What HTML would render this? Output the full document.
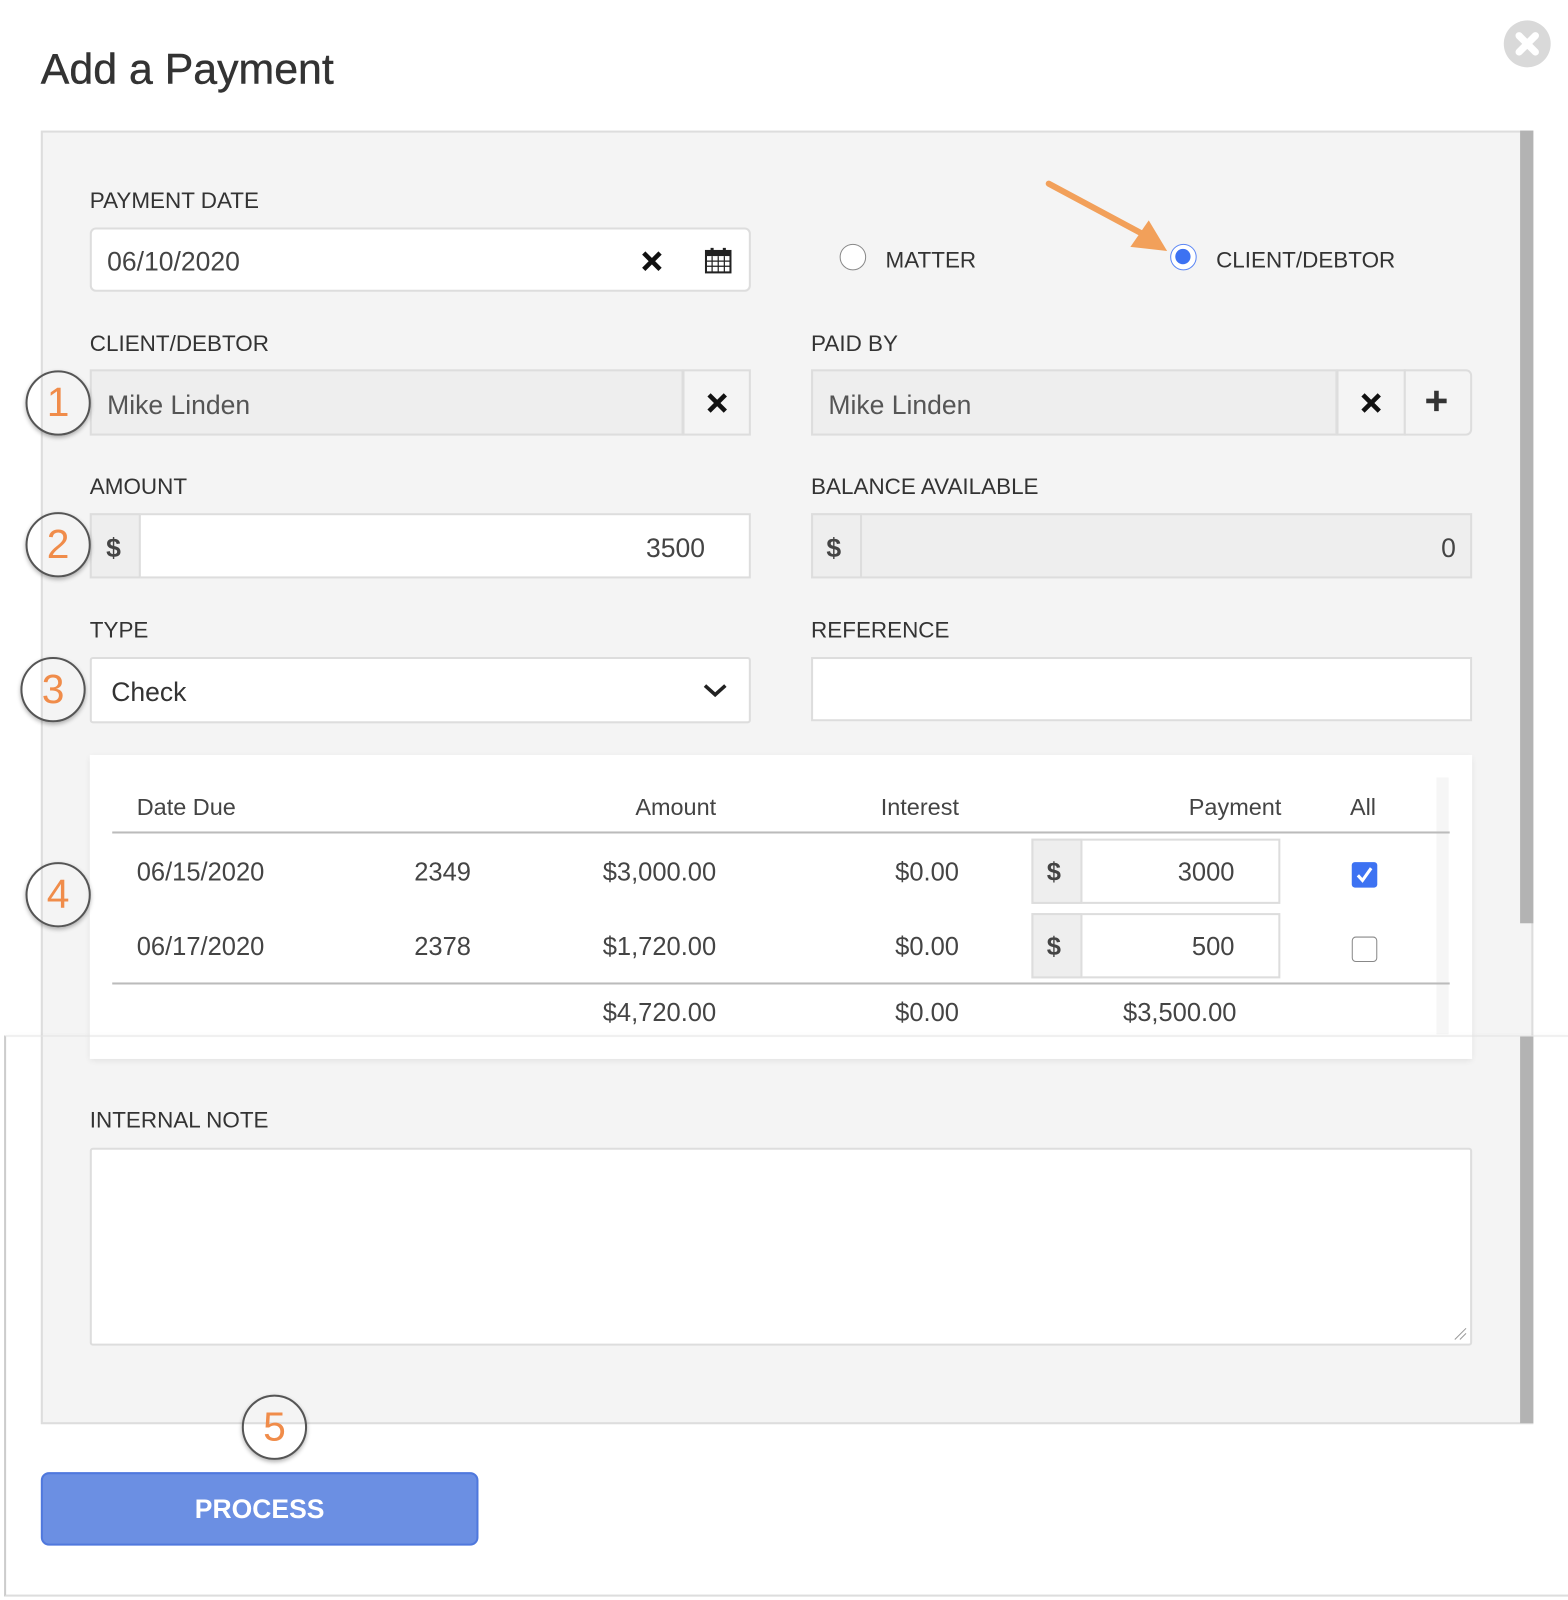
<!DOCTYPE html>
<html><head><meta charset="utf-8"><style>
html,body{margin:0;padding:0;background:#fff;width:1568px;height:1600px;overflow:hidden}
#w{position:absolute;left:0;top:0;width:1537px;height:1568px;transform:scale(1.0202);transform-origin:0 0;font-family:"Liberation Sans",sans-serif;color:#333}
.a{position:absolute}
.lbl{position:absolute;font-size:22px;color:#333;letter-spacing:0px}
.box{position:absolute;box-sizing:border-box;border:2px solid #ddd;background:#fff}
.v{position:absolute;font-size:26px;color:#444;line-height:1}
.c{position:absolute;border:2px solid #555;border-radius:50%;box-sizing:border-box;color:#f08c4a;font-size:40px;text-align:center;box-shadow:0 2px 4px rgba(0,0,0,.3)}
.t{position:absolute;font-size:25px;color:#444;line-height:1}
.b{font-weight:bold}
</style></head><body><div id="w">
<div class="a" style="left:40px;top:44px;font-size:42px;color:#333;-webkit-text-stroke:0.4px #333">Add a Payment</div>
<div class="a" style="left:1474px;top:20px;width:46px;height:46px;border-radius:50%;background:#d9d9d9"><svg width="46" height="46"><path d="M15 15L31 31M31 15L15 31" stroke="#fff" stroke-width="7" stroke-linecap="round"/></svg></div>
<div class="a" style="left:4px;top:1015px;width:1533px;height:550px;border-left:2px solid #ccc;border-bottom:2px solid #ddd;box-sizing:border-box"></div>
<div class="a" style="left:40px;top:128px;width:1463px;height:1268px;background:#f4f4f4;border:2px solid #ddd;box-sizing:border-box"></div>
<div class="a" style="left:1490px;top:128px;width:13px;height:777px;background:#b3b3b3"></div>
<div class="a" style="left:1490px;top:1015px;width:13px;height:380px;background:#b3b3b3"></div>

<div class="lbl" style="left:88px;top:184px">PAYMENT DATE</div>
<div class="box" style="left:88px;top:223px;width:648px;height:63px;border-radius:6px"></div>
<div class="v" style="left:105px;top:243px">06/10/2020</div>
<svg class="a" style="left:628px;top:245px" width="22" height="22"><path d="M3 3L19 19M19 3L3 19" stroke="#111" stroke-width="4.5"/></svg>
<svg class="a" style="left:690px;top:241px" width="28" height="28"><rect x="2" y="5" width="24" height="21" fill="none" stroke="#222" stroke-width="2"/><rect x="2" y="5" width="24" height="5" fill="#222"/><path d="M8 2v6M20 2v6" stroke="#222" stroke-width="3"/><path d="M2 15h24M2 20h24M8 10v16M14 10v16M20 10v16" stroke="#222" stroke-width="1.2"/></svg>

<div class="a" style="left:823px;top:239px;width:26px;height:26px;border-radius:50%;border:1.5px solid #888;background:#fff;box-sizing:border-box"></div>
<div class="lbl" style="left:868px;top:242px">MATTER</div>
<div class="a" style="left:1147px;top:239px;width:26px;height:26px;border-radius:50%;border:1.5px solid #5b86f5;background:#fff;box-sizing:border-box"><div class="a" style="left:4px;top:4px;width:15px;height:15px;border-radius:50%;background:#3d72f2"></div></div>
<div class="lbl" style="left:1192px;top:242px">CLIENT/DEBTOR</div>
<svg class="a" style="left:1020px;top:170px" width="140" height="90"><path d="M8 10L105 62" stroke="#f2a05a" stroke-width="6" stroke-linecap="round"/><path d="M124 76L88 72L106 46Z" fill="#f2a05a"/></svg>

<div class="lbl" style="left:88px;top:324px">CLIENT/DEBTOR</div>
<div class="box" style="left:88px;top:362px;width:582px;height:65px;background:#eee"></div>
<div class="box" style="left:669px;top:362px;width:67px;height:65px;background:#f4f4f4"></div>
<div class="v" style="left:105px;top:384px;color:#555">Mike Linden</div>
<svg class="a" style="left:692px;top:384px" width="22" height="22"><path d="M3 3L19 19M19 3L3 19" stroke="#111" stroke-width="4.5"/></svg>

<div class="lbl" style="left:795px;top:324px">PAID BY</div>
<div class="box" style="left:795px;top:362px;width:516px;height:65px;background:#eee"></div>
<div class="box" style="left:1310px;top:362px;width:68px;height:65px;background:#f4f4f4"></div>
<div class="box" style="left:1376px;top:362px;width:67px;height:65px;background:#f4f4f4;border-radius:0 6px 6px 0"></div>
<div class="v" style="left:812px;top:384px;color:#555">Mike Linden</div>
<svg class="a" style="left:1333px;top:384px" width="22" height="22"><path d="M3 3L19 19M19 3L3 19" stroke="#111" stroke-width="4.5"/></svg>
<svg class="a" style="left:1397px;top:382px" width="22" height="22"><path d="M11 1V21M1 11H21" stroke="#333" stroke-width="4.5"/></svg>

<div class="lbl" style="left:88px;top:464px">AMOUNT</div>
<div class="box" style="left:88px;top:503px;width:648px;height:64px"></div>
<div class="box" style="left:88px;top:503px;width:50px;height:64px;background:#eee"></div>
<div class="v b" style="left:104px;top:524px">$</div>
<div class="v" style="left:500px;width:191px;text-align:right;top:524px">3500</div>

<div class="lbl" style="left:795px;top:464px">BALANCE AVAILABLE</div>
<div class="box" style="left:795px;top:503px;width:648px;height:64px;background:#eee"></div>
<div class="box" style="left:795px;top:503px;width:50px;height:64px;background:#eee"></div>
<div class="v b" style="left:810px;top:524px">$</div>
<div class="v" style="left:1300px;width:127px;text-align:right;top:524px">0</div>

<div class="lbl" style="left:88px;top:605px">TYPE</div>
<div class="box" style="left:88px;top:644px;width:648px;height:65px;border-radius:3px"></div>
<div class="v" style="left:109px;top:665px;color:#333">Check</div>
<svg class="a" style="left:688px;top:668px" width="26" height="18"><path d="M3 4L13 13L23 4" fill="none" stroke="#222" stroke-width="3.5"/></svg>

<div class="lbl" style="left:795px;top:605px">REFERENCE</div>
<div class="box" style="left:795px;top:644px;width:648px;height:63px"></div>

<div class="a" style="left:88px;top:740px;width:1355px;height:298px;background:#fff;box-shadow:0 2px 6px rgba(0,0,0,.08)"></div>
<div class="a" style="left:1408px;top:762px;width:12px;height:252px;background:#f6f6f6"></div>
<div class="t" style="left:134px;top:780px;font-size:23px">Date Due</div>
<div class="t" style="left:560px;width:142px;text-align:right;top:780px;font-size:23px">Amount</div>
<div class="t" style="left:800px;width:140px;text-align:right;top:780px;font-size:23px">Interest</div>
<div class="t" style="left:1100px;width:156px;text-align:right;top:780px;font-size:23px">Payment</div>
<div class="t" style="left:1310px;width:52px;text-align:center;top:780px;font-size:23px">All</div>
<div class="a" style="left:110px;top:815px;width:1311px;height:2px;background:#bbb"></div>
<div class="t" style="left:134px;top:843px">06/15/2020</div>
<div class="t" style="left:406px;top:843px">2349</div>
<div class="t" style="left:540px;width:162px;text-align:right;top:843px">$3,000.00</div>
<div class="t" style="left:800px;width:140px;text-align:right;top:843px">$0.00</div>
<div class="box" style="left:1011px;top:822px;width:244px;height:64px"></div>
<div class="box" style="left:1011px;top:822px;width:50px;height:64px;background:#eee"></div>
<div class="t b" style="left:1026px;top:843px">$</div>
<div class="t" style="left:1100px;width:110px;text-align:right;top:843px">3000</div>
<div class="a" style="left:1325px;top:845px;width:25px;height:25px;background:#3d72f2;border-radius:3px"><svg width="25" height="25"><path d="M6 13L10.5 18L19 6" fill="none" stroke="#fff" stroke-width="3"/></svg></div>

<div class="t" style="left:134px;top:916px">06/17/2020</div>
<div class="t" style="left:406px;top:916px">2378</div>
<div class="t" style="left:540px;width:162px;text-align:right;top:916px">$1,720.00</div>
<div class="t" style="left:800px;width:140px;text-align:right;top:916px">$0.00</div>
<div class="box" style="left:1011px;top:895px;width:244px;height:64px"></div>
<div class="box" style="left:1011px;top:895px;width:50px;height:64px;background:#eee"></div>
<div class="t b" style="left:1026px;top:916px">$</div>
<div class="t" style="left:1100px;width:110px;text-align:right;top:916px">500</div>
<div class="a" style="left:1325px;top:918px;width:25px;height:25px;border:1.5px solid #888;border-radius:4px;box-sizing:border-box;background:#fff"></div>
<div class="a" style="left:110px;top:963px;width:1311px;height:2px;background:#bbb"></div>
<div class="t" style="left:540px;width:162px;text-align:right;top:981px">$4,720.00</div>
<div class="t" style="left:800px;width:140px;text-align:right;top:981px">$0.00</div>
<div class="t" style="left:1050px;width:162px;text-align:right;top:981px">$3,500.00</div>
<div class="a" style="left:5px;top:1015px;width:1532px;height:1px;background:#e4e4e4;box-shadow:0 -1px 3px rgba(0,0,0,.05)"></div>

<div class="lbl" style="left:88px;top:1085px">INTERNAL NOTE</div>
<div class="box" style="left:88px;top:1125px;width:1355px;height:194px;border-radius:3px"></div>
<svg class="a" style="left:1424px;top:1300px" width="14" height="14"><path d="M2 13L13 2M7 13L13 7" stroke="#999" stroke-width="1"/></svg>

<div class="a b" style="left:40px;top:1443px;width:429px;height:72px;box-sizing:border-box;background:#6b8fe3;border:2px solid #4f78dd;border-radius:8px;color:#fff;font-size:26px;text-align:center;line-height:68px">PROCESS</div>

<div class="c" style="left:25px;top:363px;width:64px;height:64px;line-height:60px">1</div>
<div class="c" style="left:25px;top:502px;width:64px;height:64px;line-height:60px">2</div>
<div class="c" style="left:20px;top:644px;width:64px;height:64px;line-height:60px">3</div>
<div class="c" style="left:25px;top:845px;width:64px;height:64px;line-height:60px">4</div>
<div class="c" style="left:237px;top:1367px;width:64px;height:64px;line-height:60px">5</div>
</div></body></html>
